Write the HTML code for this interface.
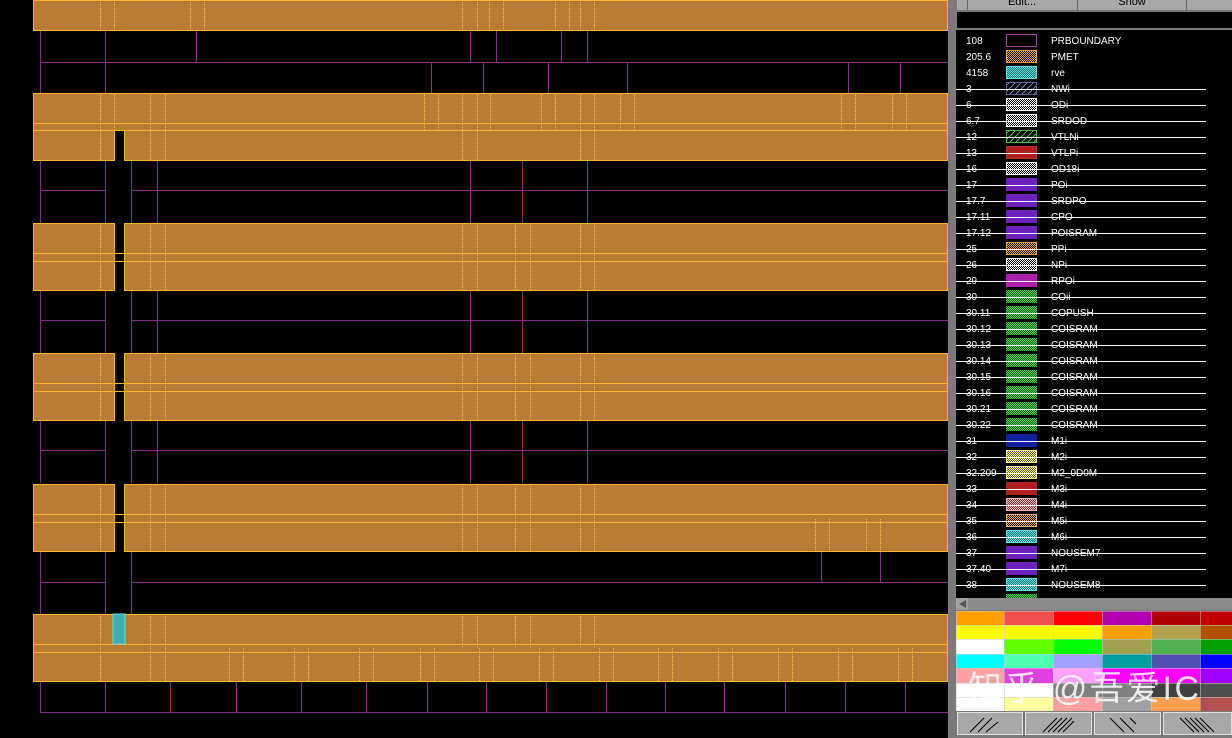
<!DOCTYPE html>
<html><head><meta charset="utf-8"><style>
html,body{margin:0;padding:0;background:#000;width:1232px;height:738px;overflow:hidden}
svg{display:block}
text{font-family:"Liberation Sans",sans-serif}
</style></head><body>
<svg width="1232" height="738" viewBox="0 0 1232 738" xmlns="http://www.w3.org/2000/svg" shape-rendering="crispEdges">
<defs>
<pattern id="ck" width="2" height="2" patternUnits="userSpaceOnUse"><rect width="2" height="2" fill="#000"/><rect width="1" height="1" fill="#f2a23c"/><rect x="1" y="1" width="1" height="1" fill="#f2a23c"/></pattern>
<pattern id="ckw" width="2" height="2" patternUnits="userSpaceOnUse"><rect width="2" height="2" fill="#000"/><rect width="1" height="1" fill="#fff"/><rect x="1" y="1" width="1" height="1" fill="#fff"/></pattern>
<pattern id="cky" width="2" height="2" patternUnits="userSpaceOnUse"><rect width="2" height="2" fill="#555"/><rect width="1" height="1" fill="#ffff80"/><rect x="1" y="1" width="1" height="1" fill="#ffff80"/></pattern>
<pattern id="ckc" width="2" height="2" patternUnits="userSpaceOnUse"><rect width="2" height="2" fill="#207070"/><rect width="1" height="1" fill="#60e0e0"/><rect x="1" y="1" width="1" height="1" fill="#60e0e0"/></pattern>
<pattern id="ckp" width="2" height="2" patternUnits="userSpaceOnUse"><rect width="2" height="2" fill="#604040"/><rect width="1" height="1" fill="#f0b0b0"/><rect x="1" y="1" width="1" height="1" fill="#f0b0b0"/></pattern>
<pattern id="ckg" width="2" height="2" patternUnits="userSpaceOnUse"><rect width="2" height="2" fill="#206020"/><rect width="1" height="1" fill="#50d050"/><rect x="1" y="1" width="1" height="1" fill="#50d050"/></pattern>
<pattern id="htch" width="6" height="6" patternUnits="userSpaceOnUse"><path d="M0 6L6 0" stroke="#8080c0" stroke-width="1"/></pattern>
<pattern id="htchg" width="6" height="6" patternUnits="userSpaceOnUse"><path d="M0 6L6 0" stroke="#40c040" stroke-width="1"/></pattern>
<g id="bandA">
<rect x="33.5" y="0.5" width="81" height="67" fill="#b87c36" stroke="#ffb030"/>
<rect x="124.5" y="0.5" width="823" height="67" fill="#b87c36" stroke="#ffb030"/>
<g stroke="#ffb030" stroke-width="1"><line x1="33" y1="30.5" x2="948" y2="30.5"/><line x1="33" y1="38.5" x2="948" y2="38.5"/></g>
<g stroke="#ffc040" stroke-dasharray="1 1"><line x1="100.5" y1="0" x2="100.5" y2="67"/><line x1="150.5" y1="0" x2="150.5" y2="67"/><line x1="165.5" y1="0" x2="165.5" y2="67"/><line x1="462.5" y1="0" x2="462.5" y2="67"/><line x1="477.5" y1="0" x2="477.5" y2="67"/><line x1="515.5" y1="0" x2="515.5" y2="67"/><line x1="530.5" y1="0" x2="530.5" y2="67"/><line x1="580.5" y1="0" x2="580.5" y2="67"/><line x1="594.5" y1="0" x2="594.5" y2="67"/></g>
</g>
</defs>
<rect width="1232" height="738" fill="#000"/>
<g stroke="#8c2a8c" stroke-width="1">
<line x1="40.5" y1="31" x2="40.5" y2="93"/><line x1="105.5" y1="31" x2="105.5" y2="93"/><line x1="196.5" y1="31" x2="196.5" y2="62"/><line x1="470.5" y1="31" x2="470.5" y2="62"/><line x1="496.5" y1="31" x2="496.5" y2="62"/><line x1="561.5" y1="31" x2="561.5" y2="62"/><line x1="587.5" y1="31" x2="587.5" y2="62"/>
<line x1="40" y1="62.5" x2="948" y2="62.5"/>
<line x1="431.5" y1="62" x2="431.5" y2="93"/><line x1="483.5" y1="62" x2="483.5" y2="93"/><line x1="548.5" y1="62" x2="548.5" y2="93"/><line x1="627.5" y1="62" x2="627.5" y2="93"/><line x1="848.5" y1="62" x2="848.5" y2="93"/><line x1="900.5" y1="62" x2="900.5" y2="93"/>
<g id="gapw">
<line x1="40.5" y1="161" x2="40.5" y2="223"/><line x1="105.5" y1="161" x2="105.5" y2="223"/><line x1="131.5" y1="161" x2="131.5" y2="223"/><line x1="157.5" y1="161" x2="157.5" y2="223"/><line x1="470.5" y1="161" x2="470.5" y2="223"/><line x1="522.5" y1="161" x2="522.5" y2="223"/><line x1="587.5" y1="161" x2="587.5" y2="223"/>
<line x1="40" y1="190.5" x2="105" y2="190.5"/><line x1="131" y1="190.5" x2="948" y2="190.5"/>
</g>
<use href="#gapw" y="130"/><use href="#gapw" y="260"/>
<line x1="40.5" y1="552" x2="40.5" y2="614"/><line x1="105.5" y1="552" x2="105.5" y2="614"/><line x1="131.5" y1="552" x2="131.5" y2="614"/><line x1="821.5" y1="552" x2="821.5" y2="582"/><line x1="880.5" y1="552" x2="880.5" y2="582"/>
<line x1="40" y1="582.5" x2="105" y2="582.5"/><line x1="131" y1="582.5" x2="948" y2="582.5"/>
<line x1="40" y1="712.5" x2="948" y2="712.5"/>
<line x1="40.5" y1="682" x2="40.5" y2="712"/><line x1="105.5" y1="682" x2="105.5" y2="712"/><line x1="170.5" y1="682" x2="170.5" y2="712"/><line x1="236.5" y1="682" x2="236.5" y2="712"/><line x1="301.5" y1="682" x2="301.5" y2="712"/><line x1="366.5" y1="682" x2="366.5" y2="712"/><line x1="427.5" y1="682" x2="427.5" y2="712"/><line x1="486.5" y1="682" x2="486.5" y2="712"/><line x1="546.5" y1="682" x2="546.5" y2="712"/><line x1="606.5" y1="682" x2="606.5" y2="712"/><line x1="665.5" y1="682" x2="665.5" y2="712"/><line x1="724.5" y1="682" x2="724.5" y2="712"/><line x1="785.5" y1="682" x2="785.5" y2="712"/><line x1="845.5" y1="682" x2="845.5" y2="712"/><line x1="905.5" y1="682" x2="905.5" y2="712"/>
</g>
<rect x="33.5" y="0.5" width="914" height="30" fill="#b87c36" stroke="#ffb030"/>
<g stroke="#ffc040" stroke-dasharray="1 1"><line x1="100.5" y1="0" x2="100.5" y2="31"/><line x1="114.5" y1="0" x2="114.5" y2="31"/><line x1="190.5" y1="0" x2="190.5" y2="31"/><line x1="204.5" y1="0" x2="204.5" y2="31"/><line x1="462.5" y1="0" x2="462.5" y2="31"/><line x1="477.5" y1="0" x2="477.5" y2="31"/><line x1="489.5" y1="0" x2="489.5" y2="31"/><line x1="503.5" y1="0" x2="503.5" y2="31"/><line x1="555.5" y1="0" x2="555.5" y2="31"/><line x1="569.5" y1="0" x2="569.5" y2="31"/><line x1="580.5" y1="0" x2="580.5" y2="31"/><line x1="594.5" y1="0" x2="594.5" y2="31"/></g>
<rect x="33.5" y="93.5" width="914" height="37" fill="#b87c36" stroke="#ffb030"/>
<rect x="33.5" y="130.5" width="81" height="30" fill="#b87c36" stroke="#ffb030"/>
<rect x="124.5" y="130.5" width="823" height="30" fill="#b87c36" stroke="#ffb030"/>
<g stroke="#ffb030"><line x1="33" y1="123.5" x2="948" y2="123.5"/></g>
<g stroke="#ffc040" stroke-dasharray="1 1"><line x1="100.5" y1="93" x2="100.5" y2="161"/><line x1="114.5" y1="93" x2="114.5" y2="130"/><line x1="150.5" y1="93" x2="150.5" y2="161"/><line x1="165.5" y1="93" x2="165.5" y2="161"/><line x1="424.5" y1="93" x2="424.5" y2="130"/><line x1="438.5" y1="93" x2="438.5" y2="130"/><line x1="462.5" y1="93" x2="462.5" y2="161"/><line x1="477.5" y1="93" x2="477.5" y2="161"/><line x1="490.5" y1="93" x2="490.5" y2="130"/><line x1="541.5" y1="93" x2="541.5" y2="130"/><line x1="555.5" y1="93" x2="555.5" y2="130"/><line x1="580.5" y1="93" x2="580.5" y2="161"/><line x1="594.5" y1="93" x2="594.5" y2="161"/><line x1="620.5" y1="93" x2="620.5" y2="130"/><line x1="634.5" y1="93" x2="634.5" y2="130"/><line x1="841.5" y1="93" x2="841.5" y2="130"/><line x1="855.5" y1="93" x2="855.5" y2="130"/><line x1="892.5" y1="93" x2="892.5" y2="130"/><line x1="906.5" y1="93" x2="906.5" y2="130"/></g>
<use href="#bandA" y="223"/><use href="#bandA" y="353"/><use href="#bandA" y="484"/>
<g stroke="#ffc040" stroke-dasharray="1 1"><line x1="815.5" y1="519" x2="815.5" y2="552"/><line x1="829.5" y1="519" x2="829.5" y2="552"/><line x1="866.5" y1="519" x2="866.5" y2="552"/><line x1="880.5" y1="519" x2="880.5" y2="552"/></g>
<rect x="33.5" y="614.5" width="914" height="67" fill="#b87c36" stroke="#ffb030"/>
<g stroke="#ffb030"><line x1="33" y1="644.5" x2="948" y2="644.5"/><line x1="33" y1="652.5" x2="948" y2="652.5"/></g>
<g stroke="#ffc040" stroke-dasharray="1 1"><line x1="100.5" y1="614" x2="100.5" y2="682"/><line x1="150.5" y1="614" x2="150.5" y2="682"/><line x1="165.5" y1="614" x2="165.5" y2="682"/><line x1="462.5" y1="614" x2="462.5" y2="648"/><line x1="477.5" y1="614" x2="477.5" y2="648"/><line x1="515.5" y1="614" x2="515.5" y2="648"/><line x1="530.5" y1="614" x2="530.5" y2="648"/><line x1="580.5" y1="614" x2="580.5" y2="648"/><line x1="594.5" y1="614" x2="594.5" y2="648"/>
<line x1="229.5" y1="648" x2="229.5" y2="682"/><line x1="243.5" y1="648" x2="243.5" y2="682"/><line x1="294.5" y1="648" x2="294.5" y2="682"/><line x1="308.5" y1="648" x2="308.5" y2="682"/><line x1="359.5" y1="648" x2="359.5" y2="682"/><line x1="373.5" y1="648" x2="373.5" y2="682"/><line x1="420.5" y1="648" x2="420.5" y2="682"/><line x1="434.5" y1="648" x2="434.5" y2="682"/><line x1="479.5" y1="648" x2="479.5" y2="682"/><line x1="493.5" y1="648" x2="493.5" y2="682"/><line x1="539.5" y1="648" x2="539.5" y2="682"/><line x1="553.5" y1="648" x2="553.5" y2="682"/><line x1="599.5" y1="648" x2="599.5" y2="682"/><line x1="613.5" y1="648" x2="613.5" y2="682"/><line x1="658.5" y1="648" x2="658.5" y2="682"/><line x1="672.5" y1="648" x2="672.5" y2="682"/><line x1="718.5" y1="648" x2="718.5" y2="682"/><line x1="732.5" y1="648" x2="732.5" y2="682"/><line x1="778.5" y1="648" x2="778.5" y2="682"/><line x1="792.5" y1="648" x2="792.5" y2="682"/><line x1="838.5" y1="648" x2="838.5" y2="682"/><line x1="852.5" y1="648" x2="852.5" y2="682"/><line x1="898.5" y1="648" x2="898.5" y2="682"/><line x1="912.5" y1="648" x2="912.5" y2="682"/></g>
<rect x="113" y="614" width="12" height="30" fill="#3cb0b0" stroke="#60e0e0"/>

<rect x="948" y="0" width="284" height="738" fill="#7a7a7a"/>
<rect x="957" y="0" width="275" height="10" fill="#a8a8a8"/>
<g stroke="#666"><line x1="967.5" y1="0" x2="967.5" y2="10"/><line x1="1077.5" y1="0" x2="1077.5" y2="10"/><line x1="1186.5" y1="0" x2="1186.5" y2="10"/></g>
<text x="1022" y="5" font-size="11" fill="#000" text-anchor="middle">Edit...</text>
<text x="1132" y="5" font-size="11" fill="#000" text-anchor="middle">Show</text>
<rect x="957" y="12" width="275" height="16" fill="#000"/>
<rect x="956" y="30" width="276" height="568" fill="#000"/>
<g font-size="10" fill="#fff">
<text x="966" y="44">108</text><rect x="1006.5" y="34.5" width="30" height="12" fill="#000" stroke="#a040a0"/><text x="1051" y="44">PRBOUNDARY</text>
<text x="966" y="60">205.6</text><rect x="1006.5" y="50.5" width="30" height="12" fill="url(#ck)" stroke="#f0a040"/><text x="1051" y="60">PMET</text>
<text x="966" y="76">4158</text><rect x="1006.5" y="66.5" width="30" height="12" fill="url(#ckc)" stroke="#60e0e0"/><text x="1051" y="76">rve</text>
<text x="966" y="92">3</text><rect x="1006.5" y="82.5" width="30" height="12" fill="url(#htch)" stroke="#6060a0"/><text x="1051" y="92">NWi</text>
<text x="966" y="108">6</text><rect x="1006.5" y="98.5" width="30" height="12" fill="url(#ckw)" stroke="#fff"/><text x="1051" y="108">ODi</text>
<text x="966" y="124">6.7</text><rect x="1006.5" y="114.5" width="30" height="12" fill="url(#ckw)" stroke="#fff"/><text x="1051" y="124">SRDOD</text>
<text x="966" y="140">12</text><rect x="1006.5" y="130.5" width="30" height="12" fill="url(#htchg)" stroke="#40c040"/><text x="1051" y="140">VTLNi</text>
<text x="966" y="156">13</text><rect x="1006.5" y="146.5" width="30" height="12" fill="#b02020" stroke="#c03030"/><text x="1051" y="156">VTLPi</text>
<text x="966" y="172">16</text><rect x="1006.5" y="162.5" width="30" height="12" fill="url(#ckw)" stroke="#fff"/><text x="1051" y="172">OD18i</text>
<text x="966" y="188">17</text><rect x="1006" y="178" width="31" height="13" fill="#7020c0"/><text x="1051" y="188">POi</text>
<text x="966" y="204">17.7</text><rect x="1006" y="194" width="31" height="13" fill="#7020c0"/><text x="1051" y="204">SRDPO</text>
<text x="966" y="220">17.11</text><rect x="1006" y="210" width="31" height="13" fill="#7020c0"/><text x="1051" y="220">CPO</text>
<text x="966" y="236">17.12</text><rect x="1006" y="226" width="31" height="13" fill="#7020c0"/><text x="1051" y="236">POISRAM</text>
<text x="966" y="252">25</text><rect x="1006.5" y="242.5" width="30" height="12" fill="url(#ck)" stroke="#f0a040"/><text x="1051" y="252">PPi</text>
<text x="966" y="268">26</text><rect x="1006.5" y="258.5" width="30" height="12" fill="url(#ckw)" stroke="#fff"/><text x="1051" y="268">NPi</text>
<text x="966" y="284">29</text><rect x="1006" y="274" width="31" height="13" fill="#b020b0"/><text x="1051" y="284">RPOi</text>
<text x="966" y="300">30</text><rect x="1006" y="290" width="31" height="13" fill="url(#ckg)"/><text x="1051" y="300">COii</text>
<text x="966" y="316">30.11</text><rect x="1006" y="306" width="31" height="13" fill="url(#ckg)"/><text x="1051" y="316">COPUSH</text>
<text x="966" y="332">30.12</text><rect x="1006" y="322" width="31" height="13" fill="url(#ckg)"/><text x="1051" y="332">COISRAM</text>
<text x="966" y="348">30.13</text><rect x="1006" y="338" width="31" height="13" fill="url(#ckg)"/><text x="1051" y="348">COISRAM</text>
<text x="966" y="364">30.14</text><rect x="1006" y="354" width="31" height="13" fill="url(#ckg)"/><text x="1051" y="364">COISRAM</text>
<text x="966" y="380">30.15</text><rect x="1006" y="370" width="31" height="13" fill="url(#ckg)"/><text x="1051" y="380">COISRAM</text>
<text x="966" y="396">30.16</text><rect x="1006" y="386" width="31" height="13" fill="url(#ckg)"/><text x="1051" y="396">COISRAM</text>
<text x="966" y="412">30.21</text><rect x="1006" y="402" width="31" height="13" fill="url(#ckg)"/><text x="1051" y="412">COISRAM</text>
<text x="966" y="428">30.22</text><rect x="1006" y="418" width="31" height="13" fill="url(#ckg)"/><text x="1051" y="428">COISRAM</text>
<text x="966" y="444">31</text><rect x="1006" y="434" width="31" height="13" fill="#1020a0"/><text x="1051" y="444">M1i</text>
<text x="966" y="460">32</text><rect x="1006.5" y="450.5" width="30" height="12" fill="url(#cky)" stroke="#ffff80"/><text x="1051" y="460">M2i</text>
<text x="966" y="476">32.209</text><rect x="1006.5" y="466.5" width="30" height="12" fill="url(#cky)" stroke="#ffff80"/><text x="1051" y="476">M2_0D0M</text>
<text x="966" y="492">33</text><rect x="1006" y="482" width="31" height="13" fill="#b02020"/><text x="1051" y="492">M3i</text>
<text x="966" y="508">34</text><rect x="1006.5" y="498.5" width="30" height="12" fill="url(#ckp)" stroke="#f0b0b0"/><text x="1051" y="508">M4i</text>
<text x="966" y="524">35</text><rect x="1006.5" y="514.5" width="30" height="12" fill="url(#ck)" stroke="#f0b070"/><text x="1051" y="524">M5i</text>
<text x="966" y="540">36</text><rect x="1006.5" y="530.5" width="30" height="12" fill="url(#ckc)" stroke="#60e0e0"/><text x="1051" y="540">M6i</text>
<text x="966" y="556">37</text><rect x="1006" y="546" width="31" height="13" fill="#7020c0"/><text x="1051" y="556">NOUSEM7</text>
<text x="966" y="572">37.40</text><rect x="1006" y="562" width="31" height="13" fill="#7020c0"/><text x="1051" y="572">M7i</text>
<text x="966" y="588">38</text><rect x="1006.5" y="578.5" width="30" height="12" fill="url(#ckc)" stroke="#60e0e0"/><text x="1051" y="588">NOUSEM8</text>
<rect x="1006" y="594" width="31" height="4" fill="url(#ckg)"/>
</g>
<g stroke="#fff" stroke-width="1">
<line x1="956" y1="89.5" x2="1206" y2="89.5"/><line x1="956" y1="105.5" x2="1206" y2="105.5"/><line x1="956" y1="121.5" x2="1206" y2="121.5"/><line x1="956" y1="137.5" x2="1206" y2="137.5"/><line x1="956" y1="153.5" x2="1206" y2="153.5"/><line x1="956" y1="169.5" x2="1206" y2="169.5"/><line x1="956" y1="185.5" x2="1206" y2="185.5"/><line x1="956" y1="201.5" x2="1206" y2="201.5"/><line x1="956" y1="217.5" x2="1206" y2="217.5"/><line x1="956" y1="233.5" x2="1206" y2="233.5"/><line x1="956" y1="249.5" x2="1206" y2="249.5"/><line x1="956" y1="265.5" x2="1206" y2="265.5"/><line x1="956" y1="281.5" x2="1206" y2="281.5"/><line x1="956" y1="297.5" x2="1206" y2="297.5"/><line x1="956" y1="313.5" x2="1206" y2="313.5"/><line x1="956" y1="329.5" x2="1206" y2="329.5"/><line x1="956" y1="345.5" x2="1206" y2="345.5"/><line x1="956" y1="361.5" x2="1206" y2="361.5"/><line x1="956" y1="377.5" x2="1206" y2="377.5"/><line x1="956" y1="393.5" x2="1206" y2="393.5"/><line x1="956" y1="409.5" x2="1206" y2="409.5"/><line x1="956" y1="425.5" x2="1206" y2="425.5"/><line x1="956" y1="441.5" x2="1206" y2="441.5"/><line x1="956" y1="457.5" x2="1206" y2="457.5"/><line x1="956" y1="473.5" x2="1206" y2="473.5"/><line x1="956" y1="489.5" x2="1206" y2="489.5"/><line x1="956" y1="505.5" x2="1206" y2="505.5"/><line x1="956" y1="521.5" x2="1206" y2="521.5"/><line x1="956" y1="537.5" x2="1206" y2="537.5"/><line x1="956" y1="553.5" x2="1206" y2="553.5"/><line x1="956" y1="569.5" x2="1206" y2="569.5"/><line x1="956" y1="585.5" x2="1206" y2="585.5"/>
</g>
<rect x="956" y="598" width="276" height="12" fill="#8a8a8a"/>
<rect x="956" y="598" width="12" height="12" fill="#a0a0a0"/>
<path d="M959 604L966 600L966 608Z" fill="#555"/>
<g stroke="#ccc" stroke-width="0.5">
<rect x="956" y="611" width="48" height="14" fill="#ffa000"/><rect x="1004" y="611" width="49" height="14" fill="#f05050"/><rect x="1053" y="611" width="49" height="14" fill="#ff0000"/><rect x="1102" y="611" width="49" height="14" fill="#b000b0"/><rect x="1151" y="611" width="49" height="14" fill="#b00000"/><rect x="1200" y="611" width="32" height="14" fill="#c00000"/>
<rect x="956" y="625" width="48" height="14" fill="#ffff00"/><rect x="1004" y="625" width="49" height="14" fill="#ffff00"/><rect x="1053" y="625" width="49" height="14" fill="#ffff00"/><rect x="1102" y="625" width="49" height="14" fill="#ffa000"/><rect x="1151" y="625" width="49" height="14" fill="#b0a050"/><rect x="1200" y="625" width="32" height="14" fill="#b05000"/>
<rect x="956" y="639" width="48" height="15" fill="#ffffff"/><rect x="1004" y="639" width="49" height="15" fill="#60ff00"/><rect x="1053" y="639" width="49" height="15" fill="#00ff00"/><rect x="1102" y="639" width="49" height="15" fill="#a0a050"/><rect x="1151" y="639" width="49" height="15" fill="#50b050"/><rect x="1200" y="639" width="32" height="15" fill="#00a000"/>
<rect x="956" y="654" width="48" height="14" fill="#00ffff"/><rect x="1004" y="654" width="49" height="14" fill="#50ffb0"/><rect x="1053" y="654" width="49" height="14" fill="#a0a0ff"/><rect x="1102" y="654" width="49" height="14" fill="#00a0a0"/><rect x="1151" y="654" width="49" height="14" fill="#5050b0"/><rect x="1200" y="654" width="32" height="14" fill="#0000ff"/>
<rect x="956" y="668" width="48" height="15" fill="#ffa0a0"/><rect x="1004" y="668" width="49" height="15" fill="#e040e0"/><rect x="1053" y="668" width="49" height="15" fill="#ffa0ff"/><rect x="1102" y="668" width="49" height="15" fill="#ff00ff"/><rect x="1151" y="668" width="49" height="15" fill="#ff00ff"/><rect x="1200" y="668" width="32" height="15" fill="#a000ff"/>
<rect x="956" y="683" width="48" height="14" fill="#ffffff"/><rect x="1004" y="683" width="49" height="14" fill="#ffffff"/><rect x="1053" y="683" width="49" height="14" fill="#808080"/><rect x="1102" y="683" width="49" height="14" fill="#808080"/><rect x="1151" y="683" width="49" height="14" fill="#404040"/><rect x="1200" y="683" width="32" height="14" fill="#505050"/>
<rect x="956" y="697" width="48" height="14" fill="#ffffff"/><rect x="1004" y="697" width="49" height="14" fill="#ffffa0"/><rect x="1053" y="697" width="49" height="14" fill="#ffa0a0"/><rect x="1102" y="697" width="49" height="14" fill="#a0a0a0"/><rect x="1151" y="697" width="49" height="14" fill="#ffa050"/><rect x="1200" y="697" width="32" height="14" fill="#b05050"/>
</g>
<text x="968" y="700" font-size="34" letter-spacing="1" fill="#fff" fill-opacity="0.85" textLength="232" style="font-family:'Liberation Sans','Noto Sans CJK SC',sans-serif">知乎 @吾爱IC</text>
<rect x="956" y="711" width="276" height="27" fill="#7a7a7a"/>
<g fill="#a8a8a8" stroke="#e0e0e0"><rect x="957.5" y="712.5" width="65" height="22"/><rect x="1025.5" y="712.5" width="66" height="22"/><rect x="1094.5" y="712.5" width="66" height="22"/><rect x="1163.5" y="712.5" width="68" height="22"/></g>
<g stroke="#000" stroke-width="1" shape-rendering="auto">
<path d="M970 732L984 718M978 732L992 718M986 732L998 722"/>
<path d="M1043 732L1057 718M1048 732L1062 718M1053 732L1067 718M1058 732L1072 718M1063 732L1074 721"/>
<path d="M1110 718L1124 732M1120 718L1134 732M1130 718L1136 724"/>
<path d="M1180 718L1194 732M1185 718L1199 732M1190 718L1204 732M1195 718L1209 732M1200 718L1214 732"/>
</g>
</svg>
</body></html>
